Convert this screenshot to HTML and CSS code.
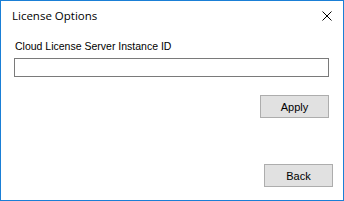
FILE: index.html
```html
<!DOCTYPE html>
<html>
<head>
<meta charset="utf-8">
<link rel="stylesheet" href="styles.css">
</head>
<body>
<div class="window">
  <div class="titlebar">
    <span class="title">License Options</span>
    <span class="close" aria-label="Close">
      <svg width="10" height="10" viewBox="0 0 10 10"><path d="M0.5 0.5 L9.5 9.5 M9.5 0.5 L0.5 9.5" stroke="#000" stroke-width="1" fill="none"/></svg>
    </span>
  </div>
  <div class="content">
    <label class="label">Cloud License Server Instance ID</label>
    <div class="textbox"></div>
    <div class="row apply-row"><button class="btn">Apply</button></div>
    <div class="row back-row"><button class="btn">Back</button></div>
  </div>
</div>
</body>
</html>
```
FILE: styles.css
```css
html, body {
  margin: 0;
  padding: 0;
  background: #ffffff;
}
.window {
  width: 344px;
  height: 201px;
  box-sizing: border-box;
  border: 1px solid #1a7fd6;
  background: #ffffff;
  display: flex;
  flex-direction: column;
}
.titlebar {
  height: 30px;
  display: flex;
  align-items: center;
  justify-content: space-between;
  padding-left: 11px;
  padding-right: 11px;
}
.title {
  font-family: "Open Sans", "Noto Sans", sans-serif;
  font-size: 11.5px;
  color: #000;
  position: relative;
  top: -1px;
}
.close {
  display: flex;
  width: 10px;
  height: 10px;
}
.content {
  display: flex;
  flex-direction: column;
  font-family: "Liberation Sans", Arial, sans-serif;
  font-size: 11px;
  color: #000;
}
.label {
  margin-top: 9px;
  margin-left: 14px;
  line-height: 13px;
  height: 13px;
  font-size: 10.5px;
}
.textbox {
  margin-top: 5px;
  margin-left: 13px;
  width: 315px;
  height: 19px;
  box-sizing: border-box;
  border: 1px solid #7a7a7a;
  background: #fff;
}
.row {
  display: flex;
  justify-content: flex-end;
}
.apply-row {
  margin-top: 18px;
  padding-right: 14px;
}
.back-row {
  margin-top: 46px;
  padding-right: 10px;
}
.btn {
  width: 69px;
  height: 23px;
  box-sizing: border-box;
  border: 1px solid #adadad;
  background: #e1e1e1;
  font-family: "Liberation Sans", Arial, sans-serif;
  font-size: 11px;
  color: #000;
  padding: 0;
  margin: 0;
}
```
